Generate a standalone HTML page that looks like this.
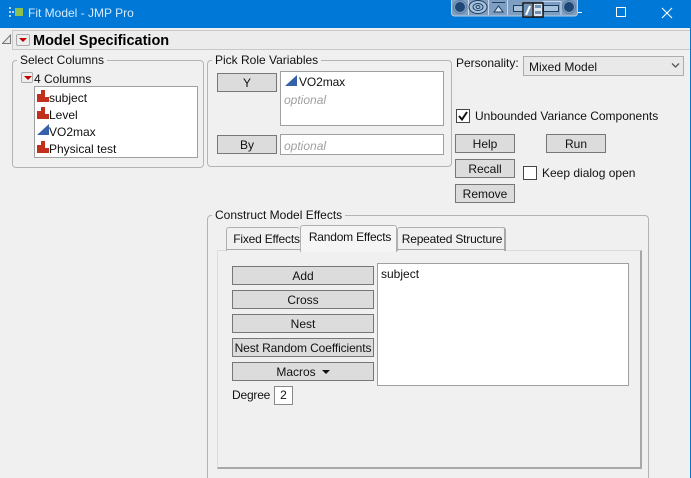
<!DOCTYPE html>
<html style="overflow:hidden;width:691px;height:478px"><head><meta charset="utf-8"><style>
html,body{margin:0;padding:0}
body{width:691px;height:478px;overflow:hidden;position:relative;background:#f0f0f0;font-family:"Liberation Sans",sans-serif;font-size:12px;color:#111}
.a{position:absolute;box-sizing:border-box}
.t{position:absolute;white-space:nowrap;line-height:16px;height:16px}
.btn{position:absolute;box-sizing:border-box;background:#dcdcdc;border:1px solid #777;text-align:center;line-height:19px;height:19px;white-space:nowrap}
.grp{position:absolute;box-sizing:border-box;border:1px solid #b4b4b4;border-radius:4px}
.leg{position:absolute;background:#f0f0f0;padding:0 3px;line-height:14px;white-space:nowrap}
.box{position:absolute;box-sizing:border-box;background:#fff;border:1px solid #a0a0a0}
.red{position:absolute;box-sizing:border-box;background:#eee;border:1px solid #aaa;border-radius:2px}
.red:after{content:"";position:absolute;left:2px;top:3px;border-left:4px solid transparent;border-right:4px solid transparent;border-top:4px solid #c00000}
.opt{color:#a0a0a0;font-style:italic}
.tab{position:absolute;box-sizing:border-box;background:#f0f0f0;border:1px solid #b0b0b0;border-bottom:none;border-radius:3px 3px 0 0;text-align:center;line-height:22px;white-space:nowrap;letter-spacing:-.2px}
svg{position:absolute}
</style></head><body>

<div class="a" style="left:0;top:0;width:691px;height:28px;background:#0078d7"></div>
<div class="a" style="left:690px;top:28px;width:1px;height:450px;background:#0078d7"></div>
<svg style="left:7px;top:5px" width="16" height="14"><rect x="8" y="3" width="8" height="8" fill="#8cc152"/><rect x="2" y="2" width="2" height="2" fill="#b8d4ee"/><rect x="2" y="6" width="2" height="2" fill="#b8d4ee"/><rect x="2" y="10" width="2" height="2" fill="#b8d4ee"/><rect x="5" y="6" width="2" height="2" fill="#b8d4ee"/></svg>
<div class="t" style="left:28px;top:5px;color:#d8eafa">Fit Model - JMP Pro</div>

<svg style="left:451px;top:0" width="128" height="17">
<rect x="0.5" y="-4" width="126" height="20" rx="3" fill="#7f9fc2" stroke="#b9cbdf"/>
<circle cx="9" cy="7" r="5" fill="#1f4775"/><circle cx="9" cy="7" r="6.500" fill="none" stroke="#5f7fa5"/>
<path d="M17.500 0V15M37.500 0V15M56.500 0V15" stroke="#c8d8e8"/>
<ellipse cx="27" cy="7" rx="9" ry="6.500" fill="#a9c2dc" stroke="#1c3f66"/><ellipse cx="27" cy="7" rx="5" ry="3.500" fill="none" stroke="#1c3f66"/><ellipse cx="27" cy="7" rx="2" ry="1.500" fill="none" stroke="#1c3f66"/>
<path d="M41 2.500H54" stroke="#1c3f66" fill="none"/><path d="M43 12L47.500 6L52 12Z" fill="#d5e1ed" stroke="#1c3f66"/>
<rect x="62.500" y="5.500" width="10" height="6" fill="#a9c2dc" stroke="#1c3f66"/>
<rect x="92.500" y="5.500" width="15" height="6" fill="#a9c2dc" stroke="#1c3f66"/>
<path d="M91.500 1.500H110V15" fill="none" stroke="#c8d8e8"/>
<circle cx="118" cy="7" r="5" fill="#1f4775"/><circle cx="118" cy="7" r="6.500" fill="none" stroke="#5f7fa5"/>
</svg>
<svg style="left:522px;top:2px" width="22" height="16"><rect x="1" y="1" width="20" height="14" fill="#dfe8f1" stroke="#111" stroke-width="1.500"/><rect x="2" y="2" width="8" height="12" fill="#6f93b8"/><path d="M11 1V15" stroke="#111" stroke-width="1.500"/><path d="M4 13L8 4" stroke="#fff" stroke-width="2"/><rect x="13" y="3" width="6" height="3" fill="#6f93b8"/><rect x="13" y="9" width="6" height="3" fill="#6f93b8"/></svg>
<div class="a" style="left:578px;top:12px;width:4px;height:1px;background:#fff"></div>
<div class="a" style="left:616px;top:7px;width:10px;height:10px;border:1px solid #fff"></div>
<svg style="left:661px;top:7px" width="12" height="12"><path d="M1 1L11 11M11 1L1 11" stroke="#fff" stroke-width="1.100"/></svg>

<div class="a" style="left:12px;top:30px;width:678px;height:20px;background:#ececec;border:1px solid #c8c8c8;border-right:none"></div>
<svg style="left:2px;top:34px" width="10" height="11"><path d="M8.500 1V9.500H0.500Z" fill="#e8e8e8" stroke="#777"/></svg>
<div class="red" style="left:16px;top:34px;width:14px;height:12px"></div>
<div class="t" style="left:33px;top:33px;font-weight:bold;font-size:14.500px;color:#000">Model Specification</div>

<div class="grp" style="left:12px;top:60px;width:192px;height:108px"></div>
<div class="leg" style="left:17px;top:53px">Select Columns</div>
<div class="red" style="left:21px;top:72px;width:12px;height:11px"></div>
<div class="t" style="left:34px;top:71px">4 Columns</div>
<div class="box" style="left:34px;top:86px;width:164px;height:72px"></div>
<svg style="left:37px;top:90px" width="12" height="13"><path d="M0 4H4V12H0ZM4 0H8V12H4ZM8 7H12V12H8Z" fill="#c1301c"/></svg>
<svg style="left:37px;top:107px" width="12" height="13"><path d="M0 4H4V12H0ZM4 0H8V12H4ZM8 7H12V12H8Z" fill="#c1301c"/></svg>
<svg style="left:37px;top:124px" width="12" height="12"><path d="M0 11L12 0V11Z" fill="#3561ab"/></svg>
<svg style="left:37px;top:141px" width="12" height="13"><path d="M0 4H4V12H0ZM4 0H8V12H4ZM8 7H12V12H8Z" fill="#c1301c"/></svg>
<div class="t" style="left:49px;top:90px">subject</div>
<div class="t" style="left:49px;top:107px">Level</div>
<div class="t" style="left:49px;top:124px">VO2max</div>
<div class="t" style="left:49px;top:141px">Physical test</div>

<div class="grp" style="left:207px;top:60px;width:245px;height:107px"></div>
<div class="leg" style="left:212px;top:53px">Pick Role Variables</div>
<div class="btn" style="left:217px;top:73px;width:60px">Y</div>
<div class="box" style="left:280px;top:71px;width:164px;height:55px"></div>
<svg style="left:285px;top:75px" width="12" height="12"><path d="M0 11L12 0V11Z" fill="#3561ab"/></svg>
<div class="t" style="left:299px;top:74px;letter-spacing:-.1px">VO2max</div>
<div class="t opt" style="left:284px;top:92px">optional</div>
<div class="btn" style="left:217px;top:135px;width:60px">By</div>
<div class="box" style="left:280px;top:134px;width:164px;height:21px"></div>
<div class="t opt" style="left:284px;top:138px">optional</div>

<div class="t" style="left:456px;top:55px">Personality:</div>
<div class="a" style="left:523px;top:56px;width:161px;height:20px;background:#e9e9e9;border:1px solid #adadad"></div>
<div class="t" style="left:529px;top:59px">Mixed Model</div>
<svg style="left:671px;top:62px" width="10" height="7"><path d="M1 1.500L4.500 5L8 1.500" fill="none" stroke="#555" stroke-width="1.300"/></svg>

<div class="a" style="left:456px;top:109px;width:14px;height:14px;background:#fff;border:1px solid #444"></div>
<svg style="left:456px;top:109px" width="14" height="14"><path d="M3 7L6 10.500L11 3" fill="none" stroke="#111" stroke-width="2"/></svg>
<div class="t" style="left:475px;top:108px">Unbounded Variance Components</div>
<div class="btn" style="left:455px;top:134px;width:60px">Help</div>
<div class="btn" style="left:546px;top:134px;width:60px">Run</div>
<div class="btn" style="left:455px;top:159px;width:60px">Recall</div>
<div class="btn" style="left:455px;top:184px;width:60px">Remove</div>
<div class="a" style="left:523px;top:166px;width:14px;height:14px;background:#fff;border:1px solid #444"></div>
<div class="t" style="left:542px;top:165px">Keep dialog open</div>

<div class="a" style="left:207px;top:215px;width:442px;height:263px;border:1px solid #b4b4b4;border-bottom:none;border-radius:4px 4px 0 0"></div>
<div class="leg" style="left:212px;top:208px">Construct Model Effects</div>
<div class="a" style="left:217px;top:250px;width:425px;height:219px;background:#f0f0f0;border:1px solid #dcdcdc;border-right:2px solid #a8a8a8;border-bottom:2px solid #a8a8a8"></div>
<div class="tab" style="left:226px;top:227px;width:74px;height:24px;border-right:none;padding-left:6px">Fixed Effects</div>
<div class="tab" style="left:397px;top:227px;width:109px;height:24px;border-right:2px solid #a8a8a8;padding-left:2px">Repeated Structure</div>
<div class="tab" style="left:300px;top:225px;width:97px;height:27px;background:#f5f5f5;padding-left:3px">Random Effects</div>
<div class="a" style="left:226px;top:249px;width:74px;height:1px;background:#a8a8a8"></div>
<div class="a" style="left:397px;top:249px;width:109px;height:1px;background:#a8a8a8"></div>

<div class="btn" style="left:232px;top:266px;width:142px">Add</div>
<div class="btn" style="left:232px;top:290px;width:142px">Cross</div>
<div class="btn" style="left:232px;top:314px;width:142px">Nest</div>
<div class="btn" style="left:232px;top:338px;width:142px;letter-spacing:-.1px">Nest Random Coefficients</div>
<div class="btn" style="left:232px;top:362px;width:142px;padding-right:14px">Macros</div>
<div class="a" style="left:322px;top:370px;border-left:4px solid transparent;border-right:4px solid transparent;border-top:4px solid #111"></div>
<div class="box" style="left:377px;top:263px;width:252px;height:123px"></div>
<div class="t" style="left:381px;top:266px">subject</div>
<div class="t" style="left:232px;top:387px;letter-spacing:-.2px">Degree</div>
<div class="box" style="left:274px;top:386px;width:19px;height:19px;text-align:center;line-height:17px;border-color:#888">2</div>
</body></html>
